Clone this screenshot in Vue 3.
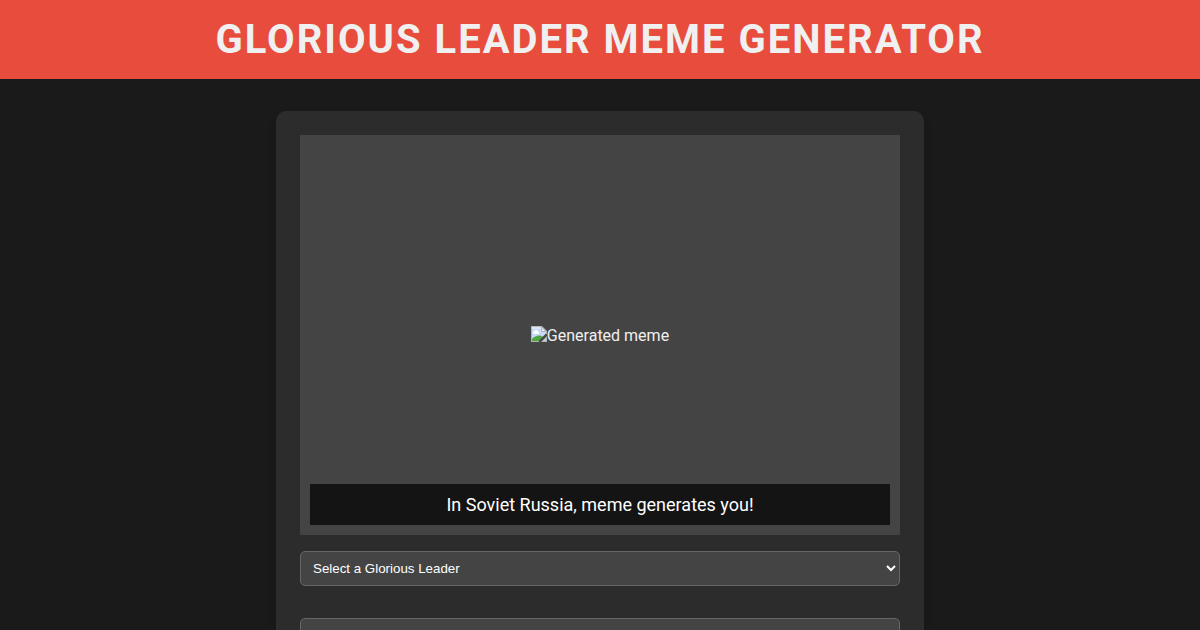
<template>
  <div class="page">
    <header class="header">
      <h1>Glorious Leader Meme Generator</h1>
    </header>

    <main class="container">
      <figure class="meme">
        <div class="meme-image">
          <div class="missing">
            <svg class="missing-icon" viewBox="0 0 16 16" aria-hidden="true">
              <path d="M0 0H11L16 5V8L8 16H0Z" fill="#b4b4b4" />
              <path d="M1 1H10V6H15V8L8 15H1Z" fill="#c6d9f7" />
              <path d="M1 1H10V3H1Z" fill="#dce8fa" />
              <path d="M11 2L14 5H11Z" fill="#eee" />
              <path d="M3 8a1.5 1.5 0 0 1 .4-2.9a2 2 0 0 1 3.7.5a1.3 1.3 0 0 1 .4 2.4Z" fill="#fff" />
              <path d="M1 15V13C3 11 5.5 9.5 8 9.5C9.5 9.5 11 10 12 11L8 15Z" fill="#4fa83f" />
              <path d="M15.5 8L8 15.5" fill="none" stroke="#444" stroke-width="1.5" />
              <path d="M16 10V16H10Z" fill="#b4b4b4" />
              <path d="M15 12V15H12Z" fill="#c9d6cf" />
            </svg>
            <span>Generated meme</span>
          </div>
        </div>
        <figcaption class="meme-text">{{ memeText }}</figcaption>
      </figure>

      <form class="controls" @submit.prevent>
        <select v-model="selectedLeader" aria-label="Select a Glorious Leader">
          <option value="">Select a Glorious Leader</option>
        </select>
        <input v-model="customText" type="text" aria-label="Meme text" />
      </form>
    </main>
  </div>
</template>

<script setup>
import { ref, computed } from 'vue'

const selectedLeader = ref('')
const customText = ref('')

const memeText = computed(() => customText.value || 'In Soviet Russia, meme generates you!')
</script>

<style>
body {
  margin: 0;
  background-color: #1a1a1a;
}
</style>

<style scoped>
.page {
  min-height: 100vh;
  background-color: #1a1a1a;
  color: #f0f0f0;
  font-family: Roboto, sans-serif;
}

.header {
  padding: 16px;
  background-color: #e74c3c;
  text-align: center;
}

h1 {
  margin: 0;
  font-size: 40px;
  font-weight: 700;
  letter-spacing: 2px;
  text-transform: uppercase;
}

.container {
  max-width: 600px;
  margin: 32px auto;
  padding: 24px;
  background-color: #2c2c2c;
  border-radius: 10px;
  box-shadow: 0 4px 8px rgba(0, 0, 0, 0.15);
}

.meme {
  position: relative;
  margin: 0 0 16px;
}

.meme-image {
  display: flex;
  align-items: center;
  justify-content: center;
  height: 400px;
  background-color: #444;
  font-size: 16px;
}

.missing {
  display: flex;
  align-items: flex-start;
}

.missing-icon {
  width: 16px;
  height: 16px;
}

/* Caption overlays the bottom of the image */
.meme-text {
  position: absolute;
  right: 10px;
  bottom: 10px;
  left: 10px;
  padding: 10px;
  background-color: rgba(0, 0, 0, 0.7);
  color: #fff;
  font-size: 18px;
  text-align: center;
}

.controls {
  display: flex;
  flex-direction: column;
  gap: 32px;
}

select,
input {
  box-sizing: border-box;
  width: 100%;
  padding: 8px;
  background-color: #444;
  border: 1px solid #666;
  border-radius: 5px;
  color: #fff;
}
</style>
